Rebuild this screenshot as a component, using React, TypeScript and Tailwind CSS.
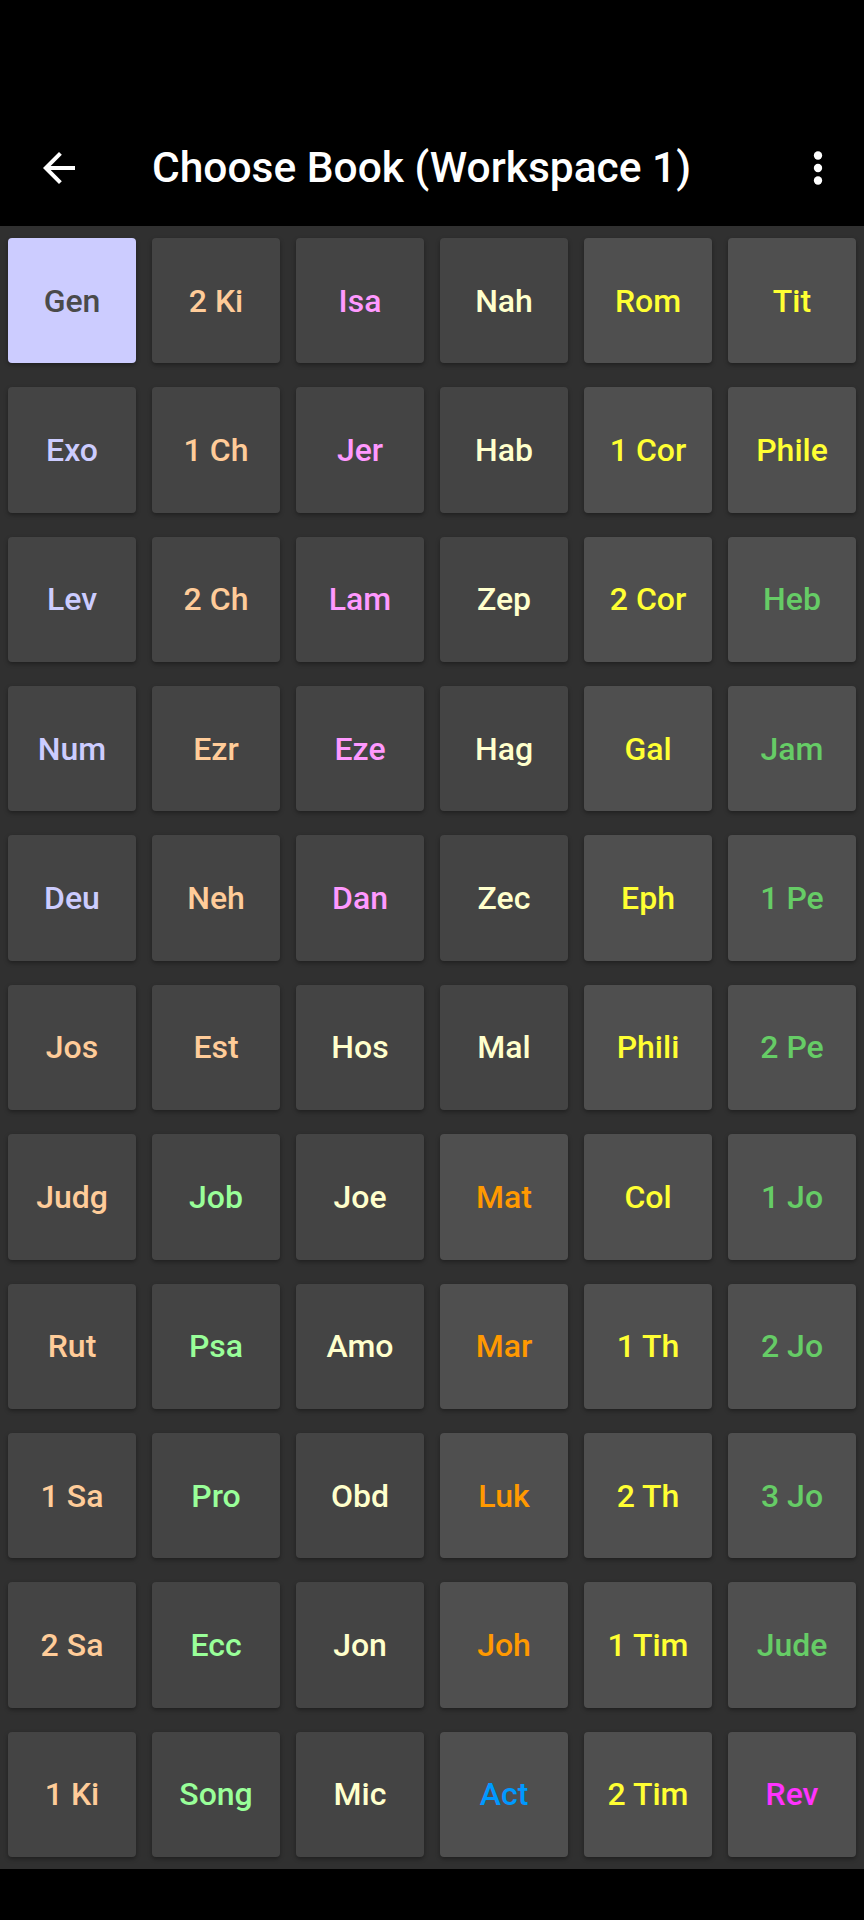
import React from "react";

type Book = { n: string; c: string; nt?: boolean; cur?: boolean };

const PEN = "text-[#ccccff]";
const HIS = "text-[#ffcc99]";
const WIS = "text-[#99ff99]";
const MAJ = "text-[#ff99ff]";
const MIN = "text-[#ffffcc]";
const GOS = "text-[#ff9900]";
const ACT = "text-[#0099ff]";
const PAU = "text-[#ffff33]";
const GEN = "text-[#66cc66]";
const REV = "text-[#ff33ff]";

const cols: Book[][] = [
  [
    { n: "Gen", c: "text-[#4a4a4a]", cur: true },
    { n: "Exo", c: PEN },
    { n: "Lev", c: PEN },
    { n: "Num", c: PEN },
    { n: "Deu", c: PEN },
    { n: "Jos", c: HIS },
    { n: "Judg", c: HIS },
    { n: "Rut", c: HIS },
    { n: "1 Sa", c: HIS },
    { n: "2 Sa", c: HIS },
    { n: "1 Ki", c: HIS },
  ],
  [
    { n: "2 Ki", c: HIS },
    { n: "1 Ch", c: HIS },
    { n: "2 Ch", c: HIS },
    { n: "Ezr", c: HIS },
    { n: "Neh", c: HIS },
    { n: "Est", c: HIS },
    { n: "Job", c: WIS },
    { n: "Psa", c: WIS },
    { n: "Pro", c: WIS },
    { n: "Ecc", c: WIS },
    { n: "Song", c: WIS },
  ],
  [
    { n: "Isa", c: MAJ },
    { n: "Jer", c: MAJ },
    { n: "Lam", c: MAJ },
    { n: "Eze", c: MAJ },
    { n: "Dan", c: MAJ },
    { n: "Hos", c: MIN },
    { n: "Joe", c: MIN },
    { n: "Amo", c: MIN },
    { n: "Obd", c: MIN },
    { n: "Jon", c: MIN },
    { n: "Mic", c: MIN },
  ],
  [
    { n: "Nah", c: MIN },
    { n: "Hab", c: MIN },
    { n: "Zep", c: MIN },
    { n: "Hag", c: MIN },
    { n: "Zec", c: MIN },
    { n: "Mal", c: MIN },
    { n: "Mat", c: GOS, nt: true },
    { n: "Mar", c: GOS, nt: true },
    { n: "Luk", c: GOS, nt: true },
    { n: "Joh", c: GOS, nt: true },
    { n: "Act", c: ACT, nt: true },
  ],
  [
    { n: "Rom", c: PAU, nt: true },
    { n: "1 Cor", c: PAU, nt: true },
    { n: "2 Cor", c: PAU, nt: true },
    { n: "Gal", c: PAU, nt: true },
    { n: "Eph", c: PAU, nt: true },
    { n: "Phili", c: PAU, nt: true },
    { n: "Col", c: PAU, nt: true },
    { n: "1 Th", c: PAU, nt: true },
    { n: "2 Th", c: PAU, nt: true },
    { n: "1 Tim", c: PAU, nt: true },
    { n: "2 Tim", c: PAU, nt: true },
  ],
  [
    { n: "Tit", c: PAU, nt: true },
    { n: "Phile", c: PAU, nt: true },
    { n: "Heb", c: GEN, nt: true },
    { n: "Jam", c: GEN, nt: true },
    { n: "1 Pe", c: GEN, nt: true },
    { n: "2 Pe", c: GEN, nt: true },
    { n: "1 Jo", c: GEN, nt: true },
    { n: "2 Jo", c: GEN, nt: true },
    { n: "3 Jo", c: GEN, nt: true },
    { n: "Jude", c: GEN, nt: true },
    { n: "Rev", c: REV, nt: true },
  ],
];

const rows: Book[] = [];
for (let r = 0; r < 11; r++) for (let c = 0; c < 6; c++) rows.push(cols[c][r]);

export default function App() {
  return (
    <div className="w-[864px] h-[1920px] bg-black flex flex-col" style={{ fontFamily: "Roboto, 'Noto Sans', sans-serif" }}>
      <div className="h-[120px]" />
      <div className="h-[106px] flex items-center pb-[10px]">
        <div className="w-[48px] h-[48px] ml-[35px] flex items-center justify-center">
          <svg viewBox="0 0 24 24" width="48" height="48" fill="white">
            <path d="M20 11H7.83l5.59-5.59L12 4l-8 8 8 8 1.41-1.41L7.83 13H20v-2z" />
          </svg>
        </div>
        <div className="ml-[69px] text-white text-[42.5px] font-medium leading-none">Choose Book (Workspace 1)</div>
        <div className="flex-1" />
        <div className="w-[50px] h-[50px] mr-[21px] flex items-center justify-center">
          <svg viewBox="0 0 24 24" width="50" height="50" fill="white">
            <circle cx="12" cy="6" r="2" />
            <circle cx="12" cy="12" r="2" />
            <circle cx="12" cy="18" r="2" />
          </svg>
        </div>
      </div>
      <div className="h-[1643px] bg-[#303030] px-[8px] py-[12px] grid grid-cols-6 grid-rows-11 gap-x-4 gap-y-6">
        {rows.map((b) => (
          <div
            key={b.n}
            className={`rounded-[4px] flex items-center justify-center shadow-[0_2px_4px_rgba(0,0,0,0.35)] ${
              b.cur ? "bg-[#ccccff]" : b.nt ? "bg-[#4f4f4f]" : "bg-[#444444]"
            }`}
          >
            <span className={`text-[32px] font-medium leading-none ${b.c}`}>{b.n}</span>
          </div>
        ))}
      </div>
      <div className="flex-1 bg-black" />
    </div>
  );
}
